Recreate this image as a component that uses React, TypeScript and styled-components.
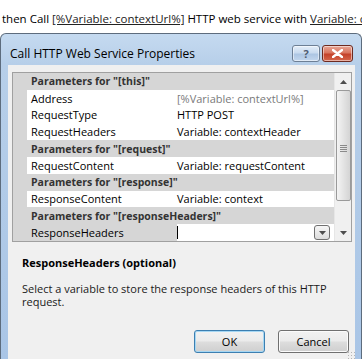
import React from "react";
import styled, { createGlobalStyle } from "styled-components";

const Global = createGlobalStyle`
  html, body { margin: 0; padding: 0; background: #fff; }
  body { font-family: "Open Sans", "Noto Sans", sans-serif; font-size: 11px; color: #000; overflow: hidden; }
  * { box-sizing: border-box; }
`;

const Page = styled.div`
  width: 362px;
  height: 359px;
  overflow: hidden;
  background: #fff;
`;

const Sentence = styled.div`
  height: 33px;
  padding: 11px 0 0 2px;
  white-space: nowrap;
  overflow: hidden;
  font-size: 11.5px;
  line-height: 16px;
`;

const Link = styled.span`
  text-decoration: underline;
  color: #222;
`;

const Dialog = styled.div`
  width: 362px;
  height: 326px;
  border: 1px solid #5d6c7d;
  border-bottom: none;
  border-radius: 6px 6px 0 0;
  background: linear-gradient(180deg, #c5daf0 0px, #b7cfe9 30px, #a9c5e6 100%);
  padding: 0 6px 0 7px;
  display: flex;
  flex-direction: column;
`;

const TitleBar = styled.div`
  height: 30px;
  display: flex;
  align-items: center;
  padding: 0 2px 0 2px;
  font-size: 12px;
  color: #000;
`;

const Title = styled.div`
  flex: 1;
  padding-top: 8px;
`;

const Caption = styled.div<{ $close?: boolean }>`
  width: ${(p) => (p.$close ? 31 : 28)}px;
  height: 17px;
  margin-top: 9px;
  margin-left: 2px;
  border: 1px solid ${(p) => (p.$close ? "#6d2a20" : "#6d7f95")};
  border-radius: 3px;
  background: ${(p) =>
    p.$close
      ? "linear-gradient(180deg, #e8a797 0%, #d9755f 45%, #c4412a 55%, #d5664c 100%)"
      : "linear-gradient(180deg, #e4eef9 0%, #c9dbef 45%, #adc6e3 55%, #c3d7ee 100%)"};
  box-shadow: inset 0 0 0 1px rgba(255, 255, 255, 0.5);
  display: flex;
  align-items: center;
  justify-content: center;
  color: ${(p) => (p.$close ? "#fff" : "#4e5c70")};
  font-weight: bold;
  font-size: 11px;
  line-height: 1;
`;

const Client = styled.div`
  flex: 1;
  margin-top: 1px;
  background: #f0f0f0;
  padding: 7px 3px 0 4px;
  display: flex;
  flex-direction: column;
  position: relative;
`;

const Grid = styled.div`
  height: 170px;
  border: 1px solid #a0a0a0;
  background: #fff;
  display: flex;
`;

const Rows = styled.div`
  flex: 1;
  display: flex;
  flex-direction: column;
`;

const Row = styled.div<{ $kind: "header" | "item" | "selected" }>`
  height: 17px;
  display: flex;
  align-items: center;
  background: ${(p) => (p.$kind === "header" ? "#d6d6d6" : "#fff")};
  font-weight: ${(p) => (p.$kind === "header" ? "bold" : "normal")};
  font-size: ${(p) => (p.$kind === "header" ? "10.5px" : "11px")};
  color: ${(p) => (p.$kind === "header" ? "#333" : "#000")};
  white-space: nowrap;
`;

const Gutter = styled.div`
  width: 14px;
  align-self: stretch;
  background: #d6d6d6;
`;

const Name = styled.div<{ $selected?: boolean }>`
  width: 150px;
  align-self: stretch;
  display: flex;
  align-items: center;
  padding-left: 4px;
  background: ${(p) => (p.$selected ? "#d6d6d6" : "transparent")};
`;

const Value = styled.div<{ $muted?: boolean }>`
  flex: 1;
  color: ${(p) => (p.$muted ? "#7a7a7a" : "#000")};
`;

const HeaderText = styled.div`
  padding-left: 4px;
`;

const EditCell = styled.div`
  flex: 1;
  align-self: stretch;
  display: flex;
  align-items: center;
  justify-content: space-between;
  padding-right: 4px;
`;

const Caret = styled.div`
  width: 1px;
  height: 13px;
  background: #000;
`;

const DropButton = styled.div`
  width: 16px;
  height: 15px;
  border: 1px solid #707070;
  border-radius: 3px;
  background: linear-gradient(180deg, #f6f6f6, #dcdcdc);
  display: flex;
  align-items: center;
  justify-content: center;
`;

const Scrollbar = styled.div`
  width: 17px;
  background: #f0f0f0;
  border-left: 1px solid #e6e6e6;
  display: flex;
  flex-direction: column;
  align-items: center;
`;

const ArrowBox = styled.div`
  height: 17px;
  width: 100%;
  display: flex;
  align-items: center;
  justify-content: center;
`;

const Thumb = styled.div`
  width: 15px;
  height: 111px;
  border: 1px solid #9a9a9a;
  border-radius: 2px;
  background: linear-gradient(90deg, #f4f4f4, #e2e2e2 55%, #d4d4d4);
  display: flex;
  align-items: flex-end;
  justify-content: center;
  padding-bottom: 48px;
`;

const Grip = styled.div`
  width: 7px;
  height: 7px;
  background: repeating-linear-gradient(180deg, #8a8a8a 0 1px, transparent 1px 2px);
`;

const Track = styled.div`
  flex: 1;
`;

const Description = styled.div`
  padding: 14px 0 0 10px;
`;

const DescTitle = styled.div`
  font-weight: bold;
  font-size: 11px;
  line-height: 14px;
  color: #000;
`;

const DescText = styled.div`
  margin-top: 12px;
  font-size: 11px;
  line-height: 13px;
  color: #1a1a1a;
  width: 330px;
`;

const Buttons = styled.div`
  margin-top: auto;
  padding: 0 3px 6px 0;
  display: flex;
  justify-content: flex-end;
  gap: 13px;
`;

const Button = styled.div<{ $default?: boolean }>`
  width: 71px;
  height: 23px;
  border: 1px solid ${(p) => (p.$default ? "#3c7fb1" : "#707070")};
  border-radius: 3px;
  background: linear-gradient(180deg, #f2f2f2 0%, #ebebeb 48%, #dddddd 52%, #cfcfcf 100%);
  box-shadow: inset 0 0 0 1px ${(p) => (p.$default ? "#a6d7f3" : "#fbfbfb")};
  display: flex;
  align-items: center;
  justify-content: center;
  font-size: 11px;
  color: #000;
`;

const ResizeGrip = styled.div`
  position: absolute;
  right: 0;
  bottom: 0;
  width: 8px;
  height: 8px;
  background: radial-gradient(circle, #b5b5b5 0.8px, transparent 1px) 0 0 / 3px 3px;
`;

const Arrow = ({ up }: { up?: boolean }) => (
  <svg width="7" height="4" viewBox="0 0 7 4">
    <path d={up ? "M0 4 L3.5 0 L7 4 Z" : "M0 0 L7 0 L3.5 4 Z"} fill="#4d4d4d" />
  </svg>
);

type Item =
  | { kind: "header"; text: string }
  | { kind: "item"; name: string; value: string; muted?: boolean }
  | { kind: "selected"; name: string };

const items: Item[] = [
  { kind: "header", text: 'Parameters for "[this]"' },
  { kind: "item", name: "Address", value: "[%Variable: contextUrl%]", muted: true },
  { kind: "item", name: "RequestType", value: "HTTP POST" },
  { kind: "item", name: "RequestHeaders", value: "Variable: contextHeader" },
  { kind: "header", text: 'Parameters for "[request]"' },
  { kind: "item", name: "RequestContent", value: "Variable: requestContent" },
  { kind: "header", text: 'Parameters for "[response]"' },
  { kind: "item", name: "ResponseContent", value: "Variable: context" },
  { kind: "header", text: 'Parameters for "[responseHeaders]"' },
  { kind: "selected", name: "ResponseHeaders" },
];

export default function App() {
  return (
    <Page>
      <Global />
      <Sentence>
        then Call <Link>[%Variable: contextUrl%]</Link> HTTP web service with <Link>Variable: contextHeader</Link>
      </Sentence>
      <Dialog>
        <TitleBar>
          <Title>Call HTTP Web Service Properties</Title>
          <Caption>?</Caption>
          <Caption $close>
            <svg width="11" height="9" viewBox="0 0 11 9">
              <path d="M1 1 L10 8 M10 1 L1 8" stroke="#fff" strokeWidth="2.4" strokeLinecap="round" />
            </svg>
          </Caption>
        </TitleBar>
        <Client>
          <Grid>
            <Rows>
              {items.map((it, i) => {
                if (it.kind === "header") {
                  return (
                    <Row key={i} $kind="header">
                      <Gutter />
                      <HeaderText>{it.text}</HeaderText>
                    </Row>
                  );
                }
                if (it.kind === "item") {
                  return (
                    <Row key={i} $kind="item">
                      <Gutter />
                      <Name>{it.name}</Name>
                      <Value $muted={it.muted}>{it.value}</Value>
                    </Row>
                  );
                }
                return (
                  <Row key={i} $kind="selected">
                    <Gutter />
                    <Name $selected>{it.name}</Name>
                    <EditCell>
                      <Caret />
                      <DropButton>
                        <Arrow />
                      </DropButton>
                    </EditCell>
                  </Row>
                );
              })}
            </Rows>
            <Scrollbar>
              <ArrowBox>
                <Arrow up />
              </ArrowBox>
              <Thumb>
                <Grip />
              </Thumb>
              <Track />
              <ArrowBox>
                <Arrow />
              </ArrowBox>
            </Scrollbar>
          </Grid>
          <Description>
            <DescTitle>ResponseHeaders (optional)</DescTitle>
            <DescText>Select a variable to store the response headers of this HTTP request.</DescText>
          </Description>
          <Buttons>
            <Button $default>OK</Button>
            <Button>Cancel</Button>
          </Buttons>
          <ResizeGrip />
        </Client>
      </Dialog>
    </Page>
  );
}
